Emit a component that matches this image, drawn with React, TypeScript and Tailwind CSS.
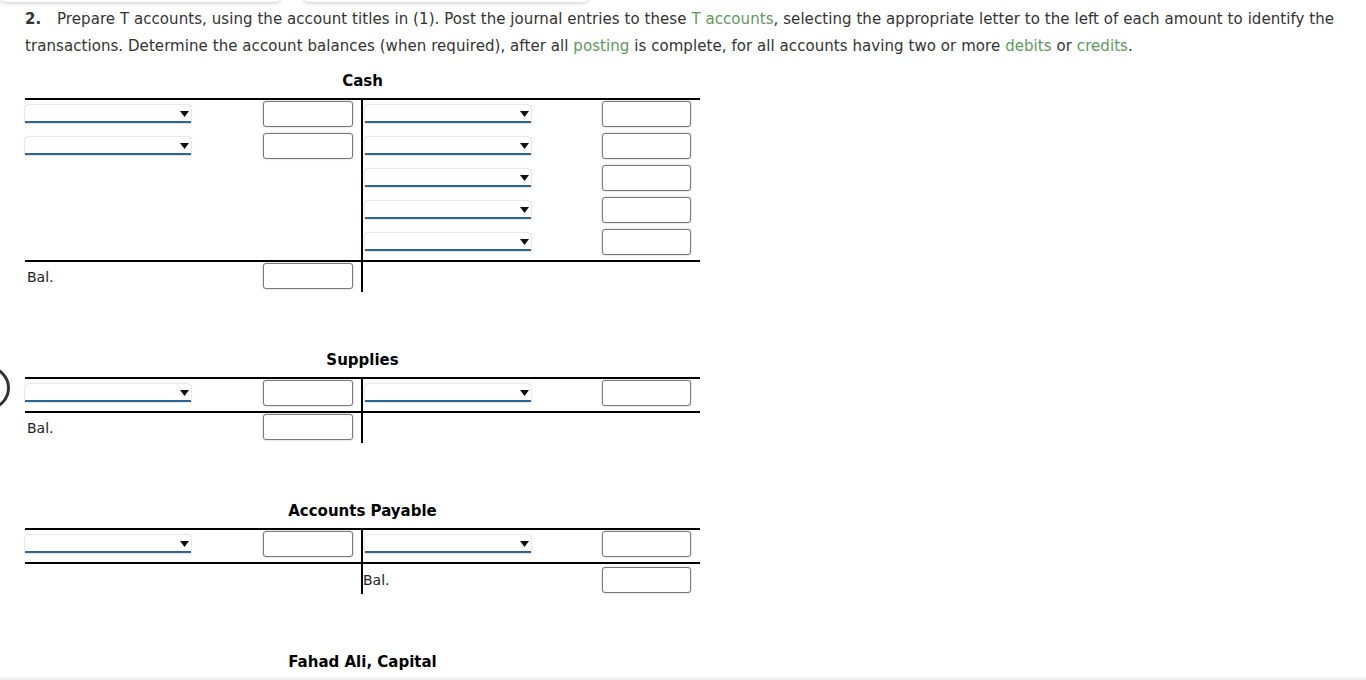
import React from "react";

const FONT = { fontFamily: '"DejaVu Sans", Verdana, sans-serif' };

function Dropdown() {
  return (
    <div className="relative mt-[5px] h-[18px] w-[166px] rounded-t-[4px] border-b-2 border-[#2b6592] bg-white shadow-[0_0_2px_rgba(0,0,0,0.35)]">
      <svg className="absolute right-[2px] top-[6px]" width="9" height="6" viewBox="0 0 9 6">
        <path d="M0 0 H9 L4.5 6 Z" fill="#111" />
      </svg>
    </div>
  );
}

function AmountBox({ width = 90 }: { width?: number }) {
  return (
    <div
      className="mt-px h-[26px] rounded-[3px] border border-[#7a7a7a] bg-white shadow-[0_0_2px_rgba(0,0,0,0.3)]"
      style={{ width }}
    />
  );
}

function EntryRow({ side }: { side: "left" | "right" }) {
  return side === "left" ? (
    <div className="flex h-[32px] items-start">
      <Dropdown />
      <div className="ml-[72px]">
        <AmountBox width={90} />
      </div>
    </div>
  ) : (
    <div className="flex h-[32px] items-start pl-[2px]">
      <Dropdown />
      <div className="ml-[71px]">
        <AmountBox width={89} />
      </div>
    </div>
  );
}

function TAccount({
  title,
  left,
  right,
  balance
}: {
  title: string;
  left: number;
  right: number;
  balance: "left" | "right";
}) {
  return (
    <div className="w-[675px]">
      <div className="mb-[7px] h-[22px] pt-[2px] text-center text-[15px] font-bold leading-[20px] text-black">{title}</div>
      <div className="flex border-t-2 border-black">
        <div className="w-[336px]">
          {Array.from({ length: left }).map((_, i) => (
            <EntryRow key={i} side="left" />
          ))}
        </div>
        <div className="flex-1 border-l-2 border-black">
          {Array.from({ length: right }).map((_, i) => (
            <EntryRow key={i} side="right" />
          ))}
        </div>
      </div>
      <div className="flex h-[32px] border-t-2 border-black text-[14px] text-[#222]">
        <div className="flex w-[336px] items-start">
          {balance === "left" ? (
            <>
              <span className="mt-[6px] w-[238px] pl-[2px] leading-[18px]">Bal.</span>
              <AmountBox width={90} />
            </>
          ) : null}
        </div>
        <div className="flex flex-1 items-start border-l-2 border-black">
          {balance === "right" ? (
            <>
              <span className="mt-[7px] w-[239px] leading-[18px]">Bal.</span>
              <div className="mt-[2px]">
                <AmountBox width={89} />
              </div>
            </>
          ) : null}
        </div>
      </div>
    </div>
  );
}

export default function App() {
  const link = "text-[#5b9b5b]";
  return (
    <div className="relative h-[680px] overflow-hidden bg-white" style={FONT}>
      <div className="absolute left-0 top-[-20px] h-[22px] w-[281px] rounded-b-[6px] bg-white shadow-[0_1px_4px_rgba(0,0,0,0.22)]" />
      <div className="absolute left-[303px] top-[-20px] h-[22px] w-[286px] rounded-b-[6px] bg-white shadow-[0_1px_4px_rgba(0,0,0,0.22)]" />
      <div className="absolute left-[-34px] top-[366px] h-[44px] w-[44px] rounded-full border-[3px] border-[#333]" />

      <div className="pl-[25px] pt-[6px]">
        <p className="whitespace-nowrap text-[15px] leading-[27px] tracking-[0.065px] text-[#333]">
          <span className="inline-block w-[32px] font-bold">2.</span>
          Prepare T accounts, using the account titles in (1). Post the journal entries to these{" "}
          <span className={link}>T accounts</span>, selecting the appropriate letter to the left of each amount to identify the
          <br />
          transactions. Determine the account balances (when required), after all <span className={link}>posting</span> is
          complete, for all accounts having two or more <span className={link}>debits</span> or{" "}
          <span className={link}>credits</span>.
        </p>

        <div className="mt-[9px] flex flex-col gap-[56px]">
          <TAccount title="Cash" left={2} right={5} balance="left" />
          <TAccount title="Supplies" left={1} right={1} balance="left" />
          <TAccount title="Accounts Payable" left={1} right={1} balance="right" />
          <div className="w-[675px] pt-[2px] text-center text-[15px] font-bold leading-[20px] text-black">Fahad Ali, Capital</div>
        </div>
      </div>

      <div className="absolute bottom-0 left-0 h-[3px] w-full bg-gradient-to-b from-[#f7f7f7] to-[#ececec]" />
    </div>
  );
}
